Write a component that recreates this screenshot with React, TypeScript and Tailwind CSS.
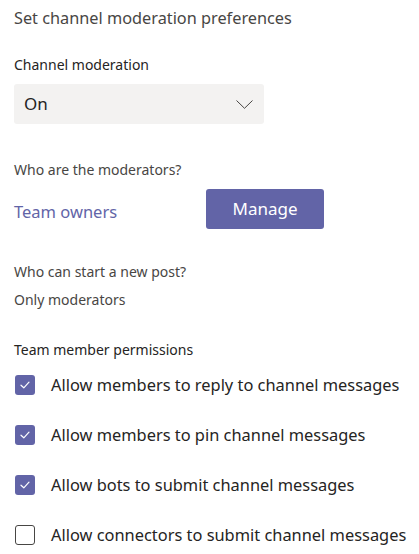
import React from 'react';

const perms = [
  { label: 'Allow members to reply to channel messages', checked: true },
  { label: 'Allow members to pin channel messages', checked: true },
  { label: 'Allow bots to submit channel messages', checked: true },
  { label: 'Allow connectors to submit channel messages', checked: false },
];

function Checkbox({ checked }: { checked: boolean }) {
  if (checked) {
    return (
      <span className="flex h-5 w-5 shrink-0 items-center justify-center rounded-[3px] bg-[#6264a7]">
        <svg width="10" height="8" viewBox="0 0 10 8" fill="none">
          <path d="M1 4.2 L3.8 6.8 L9 1.2" stroke="white" strokeWidth="1.2" strokeLinecap="round" strokeLinejoin="round" />
        </svg>
      </span>
    );
  }
  return <span className="h-5 w-5 shrink-0 rounded-[3px] border-[1.5px] border-[#484644] bg-white" />;
}

export default function App() {
  return (
    <div
      className="h-[554px] w-[419px] bg-white px-[14px] text-[#484644]"
      style={{ fontFamily: '"Noto Sans", "Open Sans", sans-serif' }}
    >
      <h1 className="pt-[7px] text-[16.3px] leading-[22px] font-normal">Set channel moderation preferences</h1>

      <div className="mt-[26px] text-[14px] leading-5 text-[#252423]">Channel moderation</div>
      <div className="mt-[9px] flex h-10 w-[250px] items-center justify-between rounded-[3px] bg-[#f3f2f1] pl-[10px] pr-[11px]">
        <span className="text-[17px] text-[#252423]">On</span>
        <svg width="17" height="9" viewBox="0 0 17 9" fill="none">
          <path d="M0.5 0.5 L8.5 8.3 L16.5 0.5" stroke="#484644" strokeWidth="1" />
        </svg>
      </div>

      <div className="mt-9 text-[14px] leading-5">Who are the moderators?</div>
      <div className="mt-[9px] flex items-center">
        <span className="mt-[6px] w-[192px] text-[16.5px] text-[#6264a7]">Team owners</span>
        <button className="flex h-10 w-[118px] items-center justify-center rounded-[3px] bg-[#6264a7] text-[17px] font-normal text-white">
          Manage
        </button>
      </div>

      <div className="mt-[33px] text-[14px] leading-5">Who can start a new post?</div>
      <div className="mt-2 text-[14px] leading-5">Only moderators</div>

      <div className="mt-[30px] text-[14px] leading-5 text-[#252423]">Team member permissions</div>
      <div className="flex flex-col">
        {perms.map((p) => (
          <label key={p.label} className="flex h-[50px] items-center pl-px">
            <Checkbox checked={p.checked} />
            <span className="ml-4 text-[16.4px] whitespace-nowrap text-[#252423]">{p.label}</span>
          </label>
        ))}
      </div>
    </div>
  );
}
